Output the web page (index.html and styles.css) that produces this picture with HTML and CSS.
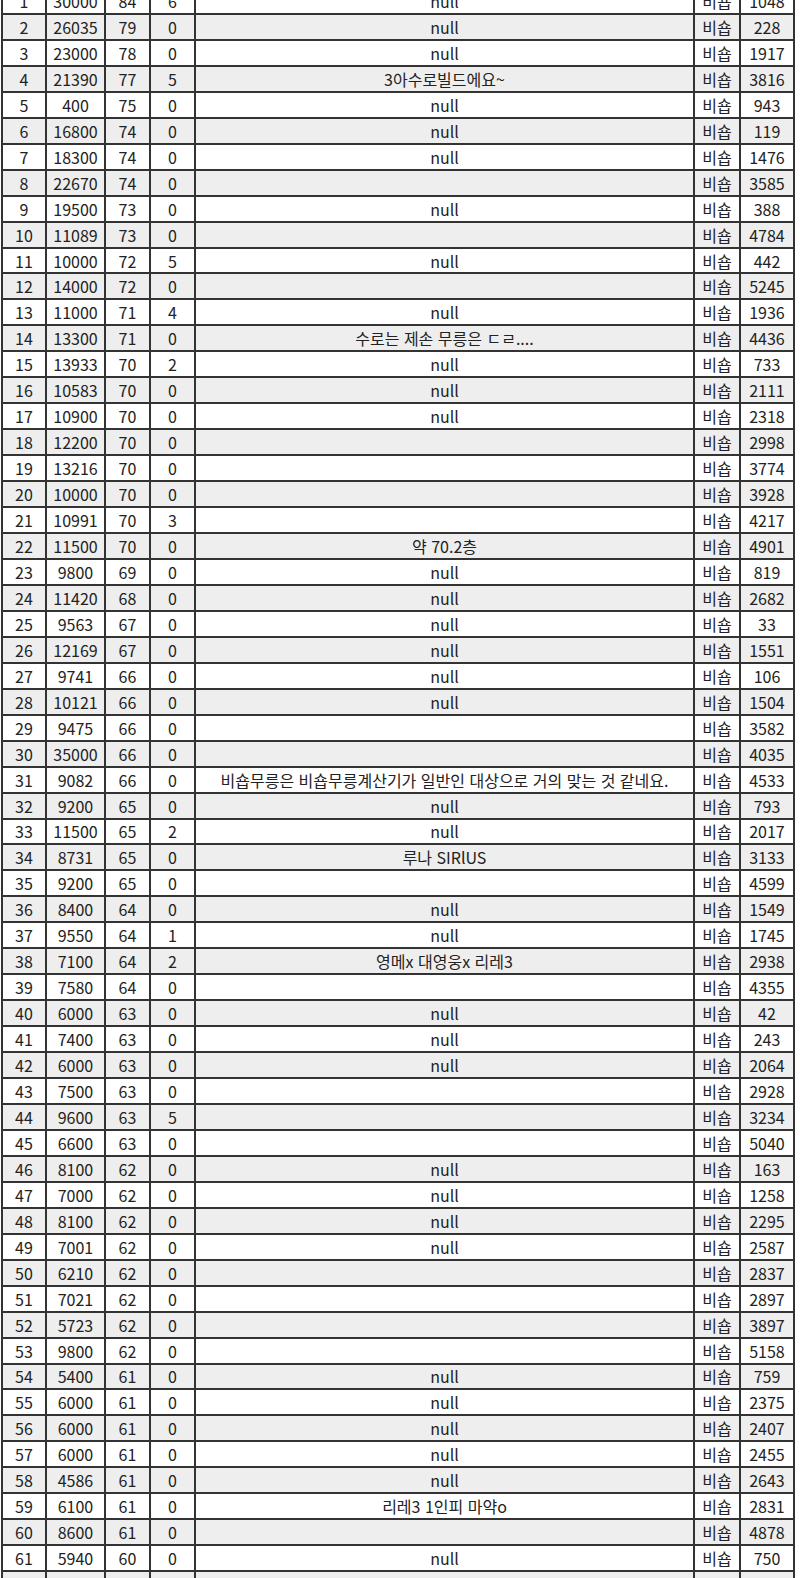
FILE: index.html
```html
<!DOCTYPE html>
<html lang="ko">
<head>
<meta charset="utf-8">
<title>비숍 무릉 기록</title>
<link rel="stylesheet" href="styles.css">
</head>
<body>
<table class="records">
<colgroup>
<col class="c-rank"><col class="c-stat"><col class="c-floor"><col class="c-min"><col class="c-note"><col class="c-job"><col class="c-id">
</colgroup>
<tbody>
<tr><td>1</td><td>30000</td><td>84</td><td>6</td><td>null</td><td>비숍</td><td>1048</td></tr>
<tr><td>2</td><td>26035</td><td>79</td><td>0</td><td>null</td><td>비숍</td><td>228</td></tr>
<tr><td>3</td><td>23000</td><td>78</td><td>0</td><td>null</td><td>비숍</td><td>1917</td></tr>
<tr><td>4</td><td>21390</td><td>77</td><td>5</td><td>3아수로빌드에요~</td><td>비숍</td><td>3816</td></tr>
<tr><td>5</td><td>400</td><td>75</td><td>0</td><td>null</td><td>비숍</td><td>943</td></tr>
<tr><td>6</td><td>16800</td><td>74</td><td>0</td><td>null</td><td>비숍</td><td>119</td></tr>
<tr><td>7</td><td>18300</td><td>74</td><td>0</td><td>null</td><td>비숍</td><td>1476</td></tr>
<tr><td>8</td><td>22670</td><td>74</td><td>0</td><td></td><td>비숍</td><td>3585</td></tr>
<tr><td>9</td><td>19500</td><td>73</td><td>0</td><td>null</td><td>비숍</td><td>388</td></tr>
<tr><td>10</td><td>11089</td><td>73</td><td>0</td><td></td><td>비숍</td><td>4784</td></tr>
<tr><td>11</td><td>10000</td><td>72</td><td>5</td><td>null</td><td>비숍</td><td>442</td></tr>
<tr><td>12</td><td>14000</td><td>72</td><td>0</td><td></td><td>비숍</td><td>5245</td></tr>
<tr><td>13</td><td>11000</td><td>71</td><td>4</td><td>null</td><td>비숍</td><td>1936</td></tr>
<tr><td>14</td><td>13300</td><td>71</td><td>0</td><td>수로는 제손 무릉은 ㄷㄹ....</td><td>비숍</td><td>4436</td></tr>
<tr><td>15</td><td>13933</td><td>70</td><td>2</td><td>null</td><td>비숍</td><td>733</td></tr>
<tr><td>16</td><td>10583</td><td>70</td><td>0</td><td>null</td><td>비숍</td><td>2111</td></tr>
<tr><td>17</td><td>10900</td><td>70</td><td>0</td><td>null</td><td>비숍</td><td>2318</td></tr>
<tr><td>18</td><td>12200</td><td>70</td><td>0</td><td></td><td>비숍</td><td>2998</td></tr>
<tr><td>19</td><td>13216</td><td>70</td><td>0</td><td></td><td>비숍</td><td>3774</td></tr>
<tr><td>20</td><td>10000</td><td>70</td><td>0</td><td></td><td>비숍</td><td>3928</td></tr>
<tr><td>21</td><td>10991</td><td>70</td><td>3</td><td></td><td>비숍</td><td>4217</td></tr>
<tr><td>22</td><td>11500</td><td>70</td><td>0</td><td>약 70.2층</td><td>비숍</td><td>4901</td></tr>
<tr><td>23</td><td>9800</td><td>69</td><td>0</td><td>null</td><td>비숍</td><td>819</td></tr>
<tr><td>24</td><td>11420</td><td>68</td><td>0</td><td>null</td><td>비숍</td><td>2682</td></tr>
<tr><td>25</td><td>9563</td><td>67</td><td>0</td><td>null</td><td>비숍</td><td>33</td></tr>
<tr><td>26</td><td>12169</td><td>67</td><td>0</td><td>null</td><td>비숍</td><td>1551</td></tr>
<tr><td>27</td><td>9741</td><td>66</td><td>0</td><td>null</td><td>비숍</td><td>106</td></tr>
<tr><td>28</td><td>10121</td><td>66</td><td>0</td><td>null</td><td>비숍</td><td>1504</td></tr>
<tr><td>29</td><td>9475</td><td>66</td><td>0</td><td></td><td>비숍</td><td>3582</td></tr>
<tr><td>30</td><td>35000</td><td>66</td><td>0</td><td></td><td>비숍</td><td>4035</td></tr>
<tr><td>31</td><td>9082</td><td>66</td><td>0</td><td>비숍무릉은 비숍무릉계산기가 일반인 대상으로 거의 맞는 것 같네요.</td><td>비숍</td><td>4533</td></tr>
<tr><td>32</td><td>9200</td><td>65</td><td>0</td><td>null</td><td>비숍</td><td>793</td></tr>
<tr><td>33</td><td>11500</td><td>65</td><td>2</td><td>null</td><td>비숍</td><td>2017</td></tr>
<tr><td>34</td><td>8731</td><td>65</td><td>0</td><td>루나 SIRlUS</td><td>비숍</td><td>3133</td></tr>
<tr><td>35</td><td>9200</td><td>65</td><td>0</td><td></td><td>비숍</td><td>4599</td></tr>
<tr><td>36</td><td>8400</td><td>64</td><td>0</td><td>null</td><td>비숍</td><td>1549</td></tr>
<tr><td>37</td><td>9550</td><td>64</td><td>1</td><td>null</td><td>비숍</td><td>1745</td></tr>
<tr><td>38</td><td>7100</td><td>64</td><td>2</td><td>영메x 대영웅x 리레3</td><td>비숍</td><td>2938</td></tr>
<tr><td>39</td><td>7580</td><td>64</td><td>0</td><td></td><td>비숍</td><td>4355</td></tr>
<tr><td>40</td><td>6000</td><td>63</td><td>0</td><td>null</td><td>비숍</td><td>42</td></tr>
<tr><td>41</td><td>7400</td><td>63</td><td>0</td><td>null</td><td>비숍</td><td>243</td></tr>
<tr><td>42</td><td>6000</td><td>63</td><td>0</td><td>null</td><td>비숍</td><td>2064</td></tr>
<tr><td>43</td><td>7500</td><td>63</td><td>0</td><td></td><td>비숍</td><td>2928</td></tr>
<tr><td>44</td><td>9600</td><td>63</td><td>5</td><td></td><td>비숍</td><td>3234</td></tr>
<tr><td>45</td><td>6600</td><td>63</td><td>0</td><td></td><td>비숍</td><td>5040</td></tr>
<tr><td>46</td><td>8100</td><td>62</td><td>0</td><td>null</td><td>비숍</td><td>163</td></tr>
<tr><td>47</td><td>7000</td><td>62</td><td>0</td><td>null</td><td>비숍</td><td>1258</td></tr>
<tr><td>48</td><td>8100</td><td>62</td><td>0</td><td>null</td><td>비숍</td><td>2295</td></tr>
<tr><td>49</td><td>7001</td><td>62</td><td>0</td><td>null</td><td>비숍</td><td>2587</td></tr>
<tr><td>50</td><td>6210</td><td>62</td><td>0</td><td></td><td>비숍</td><td>2837</td></tr>
<tr><td>51</td><td>7021</td><td>62</td><td>0</td><td></td><td>비숍</td><td>2897</td></tr>
<tr><td>52</td><td>5723</td><td>62</td><td>0</td><td></td><td>비숍</td><td>3897</td></tr>
<tr><td>53</td><td>9800</td><td>62</td><td>0</td><td></td><td>비숍</td><td>5158</td></tr>
<tr><td>54</td><td>5400</td><td>61</td><td>0</td><td>null</td><td>비숍</td><td>759</td></tr>
<tr><td>55</td><td>6000</td><td>61</td><td>0</td><td>null</td><td>비숍</td><td>2375</td></tr>
<tr><td>56</td><td>6000</td><td>61</td><td>0</td><td>null</td><td>비숍</td><td>2407</td></tr>
<tr><td>57</td><td>6000</td><td>61</td><td>0</td><td>null</td><td>비숍</td><td>2455</td></tr>
<tr><td>58</td><td>4586</td><td>61</td><td>0</td><td>null</td><td>비숍</td><td>2643</td></tr>
<tr><td>59</td><td>6100</td><td>61</td><td>0</td><td>리레3 1인피 마약o</td><td>비숍</td><td>2831</td></tr>
<tr><td>60</td><td>8600</td><td>61</td><td>0</td><td></td><td>비숍</td><td>4878</td></tr>
<tr><td>61</td><td>5940</td><td>60</td><td>0</td><td>null</td><td>비숍</td><td>750</td></tr>
<tr><td></td><td></td><td></td><td></td><td></td><td></td><td></td></tr>
</tbody>
</table>
</body>
</html>
```

FILE: styles.css
```css
html, body {
  margin: 0;
  padding: 0;
  background: #ffffff;
}

body {
  font-family: "Noto Sans CJK KR", "Noto Sans", sans-serif;
  font-size: 16px;
  color: #222222;
  overflow: hidden;
}

.records {
  border-collapse: collapse;
  table-layout: fixed;
  width: 794px;
  margin: -13px 0 0 1px;
}

.c-rank { width: 44px; }
.c-stat { width: 59px; }
.c-floor { width: 45px; }
.c-min { width: 45px; }
.c-note { width: 499px; }
.c-job { width: 46px; }
.c-id { width: 54px; }

.records tr {
  height: 25.96px;
}

.records tr:nth-child(even) {
  background: #eeeeee;
}

.records td {
  border: 2px solid #333333;
  padding: 0 2px;
  text-align: center;
  vertical-align: middle;
  white-space: nowrap;
  overflow: hidden;
  line-height: 20px;
}
```
